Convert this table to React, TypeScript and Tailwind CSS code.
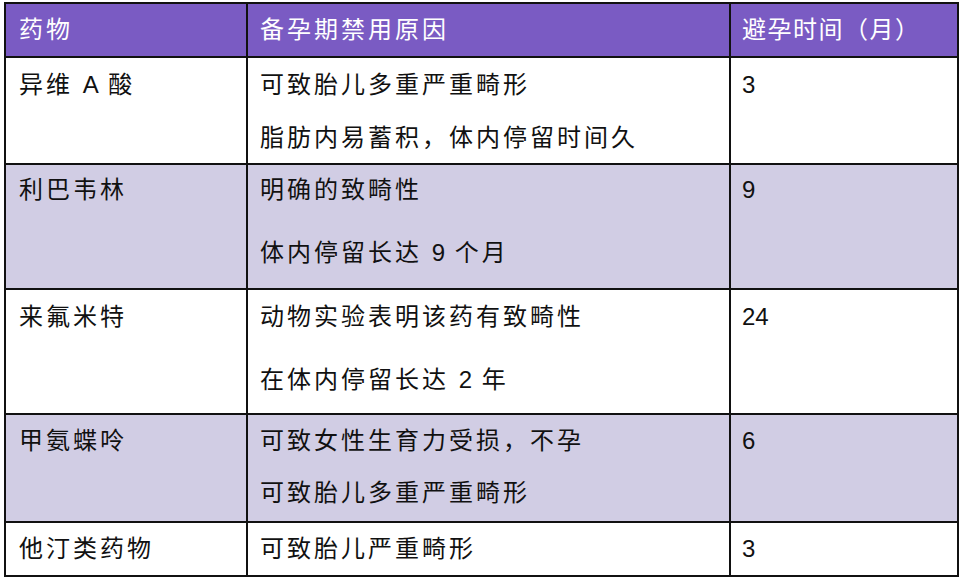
const font = { fontFamily: '"Liberation Sans", "Noto Sans CJK SC", sans-serif' };

type Row = {
    drug: string;
    reasons: string[];
    months: string;
    shaded: boolean;
    h: string;
    pt: string;
    gap: string;
};

const rows: Row[] = [
    {
        drug: '异维 A 酸',
        reasons: ['可致胎儿多重严重畸形', '脂肪内易蓄积，体内停留时间久'],
        months: '3',
        shaded: false,
        h: 'h-[107px]',
        pt: 'pt-[12px]',
        gap: 'mt-[23px]',
    },
    {
        drug: '利巴韦林',
        reasons: ['明确的致畸性', '体内停留长达 9 个月'],
        months: '9',
        shaded: true,
        h: 'h-[125px]',
        pt: 'pt-[10px]',
        gap: 'mt-[33px]',
    },
    {
        drug: '来氟米特',
        reasons: ['动物实验表明该药有致畸性', '在体内停留长达 2 年'],
        months: '24',
        shaded: false,
        h: 'h-[125px]',
        pt: 'pt-[12px]',
        gap: 'mt-[33px]',
    },
    {
        drug: '甲氨蝶呤',
        reasons: ['可致女性生育力受损，不孕', '可致胎儿多重严重畸形'],
        months: '6',
        shaded: true,
        h: 'h-[108px]',
        pt: 'pt-[11px]',
        gap: 'mt-[22px]',
    },
    {
        drug: '他汀类药物',
        reasons: ['可致胎儿严重畸形'],
        months: '3',
        shaded: false,
        h: 'h-[54px]',
        pt: 'pt-[11px]',
        gap: 'mt-0',
    },
];

// CJK text is spaced out a little, latin letters / digits are not
function Text({ children }: { children: string }) {
    const parts = children.split(/([A-Za-z0-9]+)/).filter(Boolean);
    return (
        <>
            {parts.map((p, i) =>
                /^[A-Za-z0-9]+$/.test(p) ? (
                    <span key={i} className="tracking-normal">
                        {p}
                    </span>
                ) : (
                    <span key={i}>{p}</span>
                )
            )}
        </>
    );
}

export default function App() {
    return (
        <div className="w-[964px] h-[581px] bg-white pt-[2px] pl-[4px]" style={font}>
            <div className="w-[955px] border-2 border-[#111] text-[24px] leading-[30px] tracking-[3px] text-[#111]">
                {/* header */}
                <div className="flex h-[52px] bg-[#7a5bc3] text-white">
                    <div className="w-[240px] pl-[13px] pt-[11px]">药物</div>
                    <div className="w-[483px] border-l-2 border-[#111] pl-[12px] pt-[11px]">备孕期禁用原因</div>
                    <div className="w-[228px] border-l-2 border-[#111] pl-[11px] pt-[11px] tracking-[1.5px]">避孕时间（月）</div>
                </div>

                {rows.map((r) => (
                    <div
                        key={r.drug}
                        className={`flex border-t-2 border-[#111] ${r.h} ${r.shaded ? 'bg-[#d1cde4]' : 'bg-white'}`}
                    >
                        <div className={`w-[240px] pl-[13px] ${r.pt}`}>
                            <Text>{r.drug}</Text>
                        </div>
                        <div className={`w-[483px] border-l-2 border-[#111] pl-[12px] ${r.pt}`}>
                            {r.reasons.map((t, i) => (
                                <div key={t} className={i > 0 ? r.gap : ''}>
                                    <Text>{t}</Text>
                                </div>
                            ))}
                        </div>
                        <div className={`w-[228px] border-l-2 border-[#111] pl-[11px] tracking-normal ${r.pt}`}>
                            {r.months}
                        </div>
                    </div>
                ))}
            </div>
        </div>
    );
}
